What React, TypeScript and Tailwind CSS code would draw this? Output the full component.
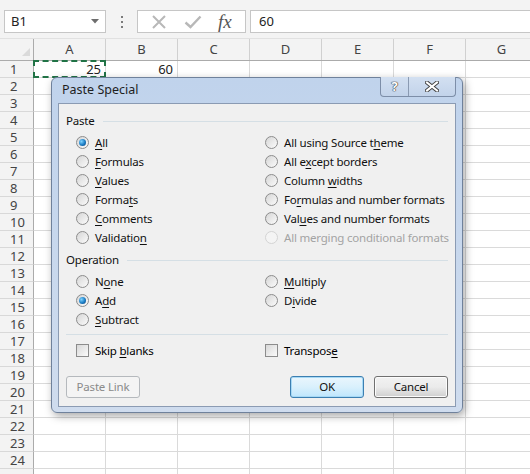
import React from "react";

const font = { fontFamily: '"Noto Sans", "Open Sans", Arial, sans-serif' };

const COLS = ["A", "B", "C", "D", "E", "F", "G"];

const Radio = ({ checked, disabled }: { checked?: boolean; disabled?: boolean }) => (
  <span
    className={`relative w-[13px] h-[13px] rounded-full border shrink-0 flex items-center justify-center ${
      disabled
        ? "border-[#d4d4d4] bg-[#f4f4f4]"
        : "border-[#8c8c8c] bg-gradient-to-br from-[#d6d6d6] to-[#fbfbfb]"
    }`}
  >
    {checked && (
      <span className="w-[7px] h-[7px] rounded-full bg-[radial-gradient(circle_at_35%_35%,#7fd3ff,#1a7cc4_55%,#0d3f75)]" />
    )}
  </span>
);

const Check = () => (
  <span className="w-[13px] h-[13px] border border-[#8c8c8c] bg-gradient-to-br from-[#d8d8d8] to-[#fbfbfb] shrink-0" />
);

type Opt = { pre: string; key: string; post: string; checked?: boolean; disabled?: boolean };

const Option = ({ o }: { o: Opt }) => (
  <div className="h-[19px] flex items-center gap-[6px] whitespace-nowrap">
    <Radio checked={o.checked} disabled={o.disabled} />
    <span className={o.disabled ? "text-[#a3a3a3]" : "text-[#111]"}>
      {o.pre}
      {o.key && <u className="underline-offset-2">{o.key}</u>}
      {o.post}
    </span>
  </div>
);

const pasteLeft: Opt[] = [
  { pre: "", key: "A", post: "ll", checked: true },
  { pre: "", key: "F", post: "ormulas" },
  { pre: "", key: "V", post: "alues" },
  { pre: "Forma", key: "t", post: "s" },
  { pre: "", key: "C", post: "omments" },
  { pre: "Validatio", key: "n", post: "" },
];

const pasteRight: Opt[] = [
  { pre: "All using Source t", key: "h", post: "eme" },
  { pre: "All e", key: "x", post: "cept borders" },
  { pre: "Column ", key: "w", post: "idths" },
  { pre: "Fo", key: "r", post: "mulas and number formats" },
  { pre: "Val", key: "u", post: "es and number formats" },
  { pre: "All merging conditional formats", key: "", post: "", disabled: true },
];

const opLeft: Opt[] = [
  { pre: "N", key: "o", post: "ne" },
  { pre: "A", key: "d", post: "d", checked: true },
  { pre: "", key: "S", post: "ubtract" },
];

const opRight: Opt[] = [
  { pre: "", key: "M", post: "ultiply" },
  { pre: "D", key: "i", post: "vide" },
];

const GroupTitle = ({ label }: { label: string }) => (
  <div className="h-[16px] flex items-center gap-[8px]">
    <span className="text-[#111]">{label}</span>
    <div className="flex-1 h-px bg-[#d5dfe5]" />
  </div>
);

const PasteSpecial = () => (
  <div
    className="absolute left-[51px] top-[77px] w-[412px] h-[336px] rounded-[6px] border border-[#6f819b] bg-gradient-to-b from-[#c0d3ec] to-[#cfdcee] shadow-[2px_3px_8px_rgba(0,0,0,0.35)] flex flex-col"
    style={font}
  >
    {/* title bar */}
    <div className="h-[25px] flex items-start relative">
      <span className="ml-[10px] mt-[6px] text-[12.5px] text-[#1e1e1e] leading-none">Paste Special</span>
      <div className="absolute right-[6px] -top-px flex h-[20px] border border-t-0 border-[#7d8ea8] rounded-b-[4px] overflow-hidden bg-gradient-to-b from-[#d3e0f1] to-[#c2d3ea]">
        <div className="w-[28px] flex items-center justify-center border-r border-[#8a9ab2]">
          <span className="text-[13px] font-bold text-white leading-none [text-shadow:0_0_1px_#333,0_0_1px_#333,0_0_1px_#333]">?</span>
        </div>
        <div className="w-[46px] flex items-center justify-center">
          <svg width="14" height="11" viewBox="0 0 14 11">
            <path d="M2 1.5 L12 9.5 M12 1.5 L2 9.5" stroke="#444" strokeWidth="4" strokeLinecap="square" />
            <path d="M2 1.5 L12 9.5 M12 1.5 L2 9.5" stroke="#fff" strokeWidth="2" strokeLinecap="square" />
          </svg>
        </div>
      </div>
    </div>

    {/* client area */}
    <div className="mx-[6px] mb-[5px] flex-1 border border-[#8b9bb3] bg-[#f0f0f0] px-[7px] pt-[9px] text-[11.5px] tracking-[-0.2px] leading-none flex flex-col">
      <GroupTitle label="Paste" />
      <div className="mt-[4px] grid grid-cols-[189px_1fr] pl-[10px]">
        <div className="flex flex-col">
          {pasteLeft.map((o) => (
            <Option key={o.pre + o.key + o.post} o={o} />
          ))}
        </div>
        <div className="flex flex-col">
          {pasteRight.map((o) => (
            <Option key={o.pre + o.key + o.post} o={o} />
          ))}
        </div>
      </div>

      <div className="mt-[5px]">
        <GroupTitle label="Operation" />
      </div>
      <div className="mt-[4px] grid grid-cols-[189px_1fr] pl-[10px]">
        <div className="flex flex-col">
          {opLeft.map((o) => (
            <Option key={o.pre + o.key + o.post} o={o} />
          ))}
        </div>
        <div className="flex flex-col">
          {opRight.map((o) => (
            <Option key={o.pre + o.key + o.post} o={o} />
          ))}
        </div>
      </div>

      <div className="mt-[5px] h-px bg-[#d5dfe5]" />

      <div className="mt-[6px] grid grid-cols-[189px_1fr] pl-[10px]">
        <div className="h-[19px] flex items-center gap-[6px]">
          <Check />
          <span>
            Skip <u className="underline-offset-2">b</u>lanks
          </span>
        </div>
        <div className="h-[19px] flex items-center gap-[6px]">
          <Check />
          <span>
            Transpos<u className="underline-offset-2">e</u>
          </span>
        </div>
      </div>

      <div className="mt-[16px] flex items-center">
        <button className="w-[74px] h-[22px] rounded-[3px] border border-[#b5b9bd] bg-[#f4f4f4] text-[#8a8a8a] text-[11.5px]">
          Paste Link
        </button>
        <div className="flex-1" />
        <button className="w-[74px] h-[22px] rounded-[3px] border border-[#3c7fb1] bg-gradient-to-b from-[#eaf6fd] via-[#d9f0fc] to-[#bee6fd] shadow-[inset_0_0_0_1px_#a7d9f5] text-[#111] text-[11.5px]">
          OK
        </button>
        <button className="ml-[10px] w-[74px] h-[22px] rounded-[3px] border border-[#707070] bg-gradient-to-b from-[#f2f2f2] via-[#ebebeb] to-[#cfcfcf] shadow-[inset_0_0_0_1px_#fcfcfc] text-[#111] text-[11.5px]">
          Cancel
        </button>
      </div>
    </div>
  </div>
);

const FormulaBar = () => (
  <div className="h-[39px] bg-[#f3f3f3] flex items-start pt-[10px] pl-[4px] gap-0 border-b border-[#e1e1e1]">
    <div className="w-[102px] h-[23px] bg-white border border-[#c6c6c6] flex items-center px-[6px]">
      <span className="text-[13px] text-[#222] flex-1">B1</span>
      <svg width="8" height="5" viewBox="0 0 8 5">
        <path d="M0 0 H8 L4 4.5 Z" fill="#6d6d6d" />
      </svg>
    </div>
    <div className="w-[31px] h-[23px] flex flex-col items-center justify-center gap-[3px]">
      <span className="w-[2px] h-[2px] bg-[#7a7a7a]" />
      <span className="w-[2px] h-[2px] bg-[#7a7a7a]" />
      <span className="w-[2px] h-[2px] bg-[#7a7a7a]" />
    </div>
    <div className="w-[109px] h-[23px] bg-white border border-[#c6c6c6] flex items-center">
      <svg className="ml-[13px]" width="16" height="14" viewBox="0 0 16 14">
        <path d="M2 1 L14 13 M14 1 L2 13" stroke="#b8b8b8" strokeWidth="2" />
      </svg>
      <svg className="ml-[17px]" width="18" height="14" viewBox="0 0 18 14">
        <path d="M1.5 7.5 L6.5 12 L16.5 1.5" stroke="#b8b8b8" strokeWidth="2.4" fill="none" />
      </svg>
      <span className="ml-[16px] text-[19px] italic text-[#555] leading-none" style={{ fontFamily: '"Liberation Serif", serif' }}>
        fx
      </span>
    </div>
    <div className="ml-[4px] flex-1 h-[23px] bg-white border border-[#c6c6c6] border-r-0 flex items-center pl-[8px]">
      <span className="text-[13px] text-[#222]">60</span>
    </div>
  </div>
);

const Sheet = () => {
  // 24 numbered rows, then one blank strip at the bottom edge
  const rows = Array.from({ length: 25 }, (_, i) => i + 1);
  return (
    <div className="flex flex-col">
      {/* column headers */}
      <div className="h-[22px] flex bg-[#f3f3f3] border-b border-[#ababab]">
        <div className="w-[34px] border-r border-[#ababab] relative shrink-0">
          <svg className="absolute right-[3px] bottom-[4px]" width="8" height="8" viewBox="0 0 8 8">
            <path d="M8 0 V8 H0 Z" fill="#dadada" />
          </svg>
        </div>
        {COLS.map((c) => (
          <div
            key={c}
            className="w-[72px] shrink-0 border-r border-[#d0d0d0] flex items-center justify-center text-[13px] text-[#444]"
          >
            {c}
          </div>
        ))}
      </div>
      {rows.map((r) => (
        <div key={r} className="h-[17px] flex shrink-0">
          <div className="w-[34px] shrink-0 bg-[#f3f3f3] border-r border-[#ababab] border-b border-b-[#d8d8d8] flex items-center pl-[10px] text-[13px] text-[#444] leading-none">
            {r <= 24 ? r : ""}
          </div>
          {COLS.map((c) => (
            <div
              key={c}
              className="w-[72px] shrink-0 border-r border-b border-[#dadada] bg-white relative flex items-center justify-end pr-[4px] text-[13px] text-[#222] leading-none"
            >
              {r === 1 && c === "A" && (
                <div className="absolute -left-px -top-px -right-px -bottom-px border-2 border-dashed border-[#217346]" />
              )}
              {r === 1 && c === "A" && "25"}
              {r === 1 && c === "B" && "60"}
            </div>
          ))}
        </div>
      ))}
    </div>
  );
};

export default function App() {
  return (
    <div className="relative w-[530px] h-[474px] overflow-hidden bg-white" style={font}>
      <FormulaBar />
      <Sheet />
      <PasteSpecial />
    </div>
  );
}
